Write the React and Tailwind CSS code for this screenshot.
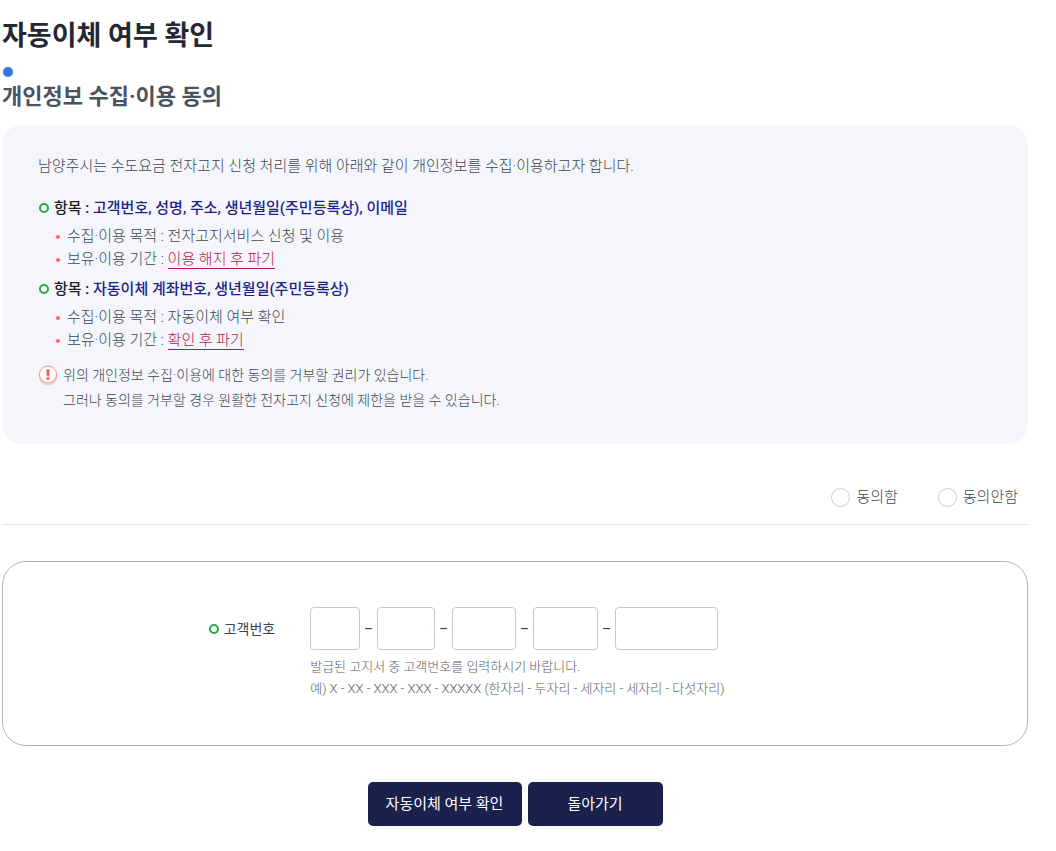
import { useState } from 'react'

const ITEMS = [
  {
    target: '고객번호, 성명, 주소, 생년월일(주민등록상), 이메일',
    purpose: '전자고지서비스 신청 및 이용',
    period: '이용 해지 후 파기',
  },
  {
    target: '자동이체 계좌번호, 생년월일(주민등록상)',
    purpose: '자동이체 여부 확인',
    period: '확인 후 파기',
  },
]

const NUMBER_FIELDS = [
  { length: 1, width: 'w-[50px]' },
  { length: 2, width: 'w-[58px]' },
  { length: 3, width: 'w-16' },
  { length: 3, width: 'w-[65px]' },
  { length: 5, width: 'w-[103px]' },
]

const Ring = () => (
  <span className="size-[10px] shrink-0 rounded-full border-2 border-[#28a745] bg-white" />
)

const RedDot = () => <span className="size-1 shrink-0 rounded-full bg-[#ff6654]" />

const NoticeIcon = () => (
  <svg className="mt-[2px] shrink-0" width="20" height="21" viewBox="0 0 20 21" aria-hidden="true">
    <circle cx="10" cy="11" r="8.6" fill="none" stroke="#f9cdc9" strokeWidth="1.6" />
    <circle cx="10" cy="9.5" r="8.5" fill="#fff" stroke="#fb8d84" strokeWidth="1" />
    <path d="M8.2 4.5h3.6l-.5 6.8H8.7z" fill="#f9655b" />
    <circle cx="10" cy="13.4" r="1.6" fill="#f9655b" />
  </svg>
)

const AgreementBox = () => (
  <div className="mt-[13px] rounded-[20px] bg-[#f4f6fb] px-9 pt-[29px] pb-[31px]">
    <p className="leading-6">
      남양주시는 수도요금 전자고지 신청 처리를 위해 아래와 같이 개인정보를 수집·이용하고자 합니다.
    </p>

    <ul className="mt-[18px]">
      {ITEMS.map((item) => (
        <li key={item.target} className="mb-[6px]">
          <div className="flex items-center gap-[5px] pl-px leading-6 font-medium text-[#222]">
            <Ring />
            <p>
              항목 : <span className="text-[#1c1f8c]">{item.target}</span>
            </p>
          </div>
          <ul className="mt-[5px] pl-[18px] leading-[23px]">
            <li className="flex items-center gap-[7px]">
              <RedDot />
              <p>수집·이용 목적 : {item.purpose}</p>
            </li>
            <li className="flex items-center gap-[7px]">
              <RedDot />
              <p>
                보유·이용 기간 :{' '}
                <span className="border-b border-[#c0134e] text-[#c0134e]">{item.period}</span>
              </p>
            </li>
          </ul>
        </li>
      ))}
    </ul>

    <div className="mt-[11px] flex gap-[5px] text-sm leading-[25px]">
      <NoticeIcon />
      <p>
        위의 개인정보 수집·이용에 대한 동의를 거부할 권리가 있습니다.
        <br />
        그러나 동의를 거부할 경우 원활한 전자고지 신청에 제한을 받을 수 있습니다.
      </p>
    </div>
  </div>
)

const AgreeRadio = ({ value, label, checked, onChange }) => (
  <label className="flex cursor-pointer items-center gap-[6px] leading-6">
    <input
      type="radio"
      name="agree"
      value={value}
      checked={checked}
      onChange={() => onChange(value)}
      className="size-[19px] appearance-none rounded-full border border-[#ccc] bg-white checked:border-[6px] checked:border-[#1b214d]"
    />
    {label}
  </label>
)

const App = () => {
  const [agree, setAgree] = useState('')

  return (
    <main className="bg-white pt-[18px] pr-7 pb-6 pl-[2px] font-[Roboto,'Noto_Sans_CJK_KR',sans-serif] text-[15px] font-light text-[#414753]">
      <h1 className="text-[27px] leading-9 font-bold text-[#252833]">자동이체 여부 확인</h1>

      <div className="mt-[13px] ml-px size-[10px] rounded-full bg-[#2f78db]" />
      <h2 className="mt-[5px] text-[22px] leading-[30px] font-bold text-[#4c5261]">
        개인정보 수집·이용 동의
      </h2>

      <AgreementBox />

      <form onSubmit={(e) => e.preventDefault()}>
        {/* Agree / disagree */}
        <div className="mt-[41px] flex justify-end gap-10 border-b border-[#e5e5e5] pr-[10px] pb-[15px]">
          <AgreeRadio value="Y" label="동의함" checked={agree === 'Y'} onChange={setAgree} />
          <AgreeRadio value="N" label="동의안함" checked={agree === 'N'} onChange={setAgree} />
        </div>

        {/* Customer number */}
        <div className="mt-9 grid grid-cols-[30%_1fr] rounded-3xl border border-[#b5b5b8] pt-[45px] pb-[45px]">
          <label
            htmlFor="number-0"
            className="flex h-[43px] items-center justify-end gap-[5px] pr-[35px] text-sm font-normal text-[#40444e]"
          >
            <Ring />
            고객번호
          </label>
          <div>
            <div className="flex items-center">
              {NUMBER_FIELDS.map((field, i) => (
                <div key={i} className="flex items-center">
                  {i > 0 && <span className="w-[17px] text-center text-sm font-normal text-[#333a5c]">–</span>}
                  <input
                    id={`number-${i}`}
                    type="text"
                    maxLength={field.length}
                    aria-label={`고객번호 ${i + 1}`}
                    className={`${field.width} h-[43px] rounded border border-[#c8c8cb] bg-white px-2 text-center`}
                  />
                </div>
              ))}
            </div>
            <p className="mt-[6px] text-[13px] leading-[22px] text-[#5a606b]">
              발급된 고지서 중 고객번호를 입력하시기 바랍니다.
              <br />
              예) X - XX - XXX - XXX - XXXXX (한자리 - 두자리 - 세자리 - 세자리 - 다섯자리)
            </p>
          </div>
        </div>

        <div className="mt-9 flex justify-center gap-[6px] font-normal text-white">
          <button type="submit" className="h-11 w-[154px] cursor-pointer rounded-[5px] bg-[#1b214d]">
            자동이체 여부 확인
          </button>
          <button type="button" className="h-11 w-[135px] cursor-pointer rounded-[5px] bg-[#1b214d]">
            돌아가기
          </button>
        </div>
      </form>
    </main>
  )
}

export default App
